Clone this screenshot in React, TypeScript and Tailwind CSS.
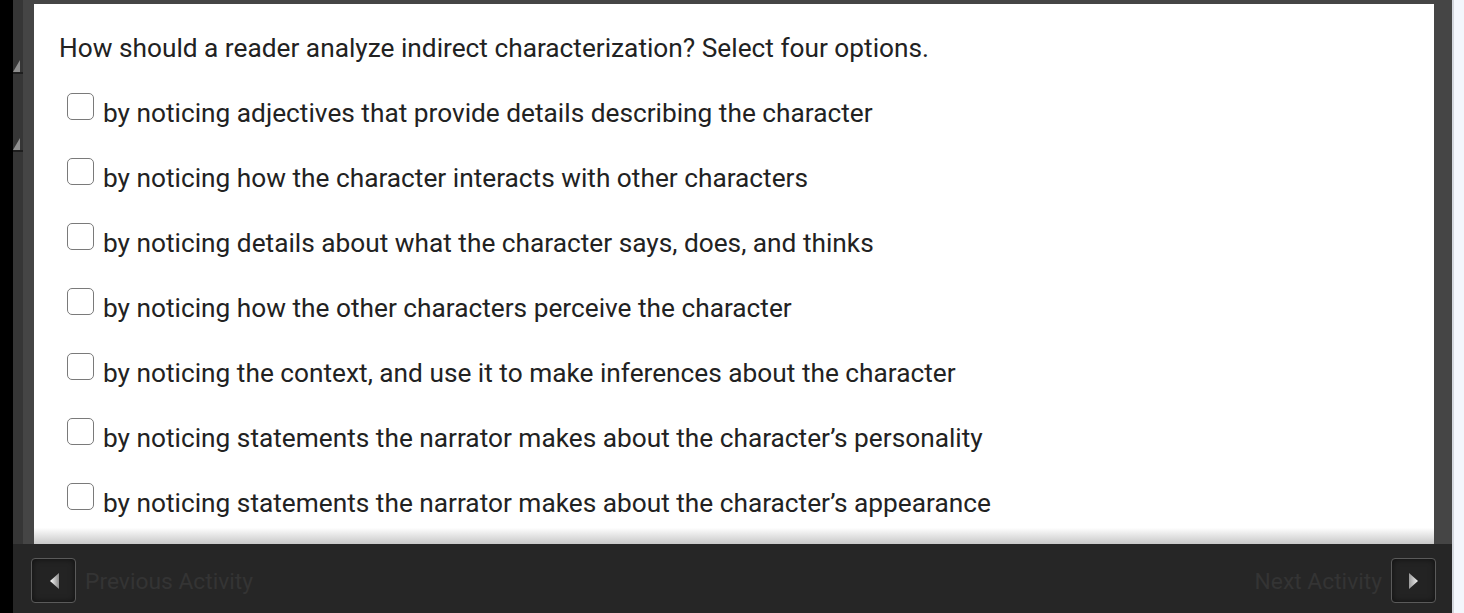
import React from "react";

const options = [
  "by noticing adjectives that provide details describing the character",
  "by noticing how the character interacts with other characters",
  "by noticing details about what the character says, does, and thinks",
  "by noticing how the other characters perceive the character",
  "by noticing the context, and use it to make inferences about the character",
  "by noticing statements the narrator makes about the character’s personality",
  "by noticing statements the narrator makes about the character’s appearance",
];

const Grip = () => (
  <div className="flex flex-col">
    <div className="flex h-[12px] w-[10px]">
      <svg width="7" height="12" viewBox="0 0 7 12">
        <polygon points="0,12 7,0 7,12" fill="#8f8f8f" />
      </svg>
    </div>
    <div className="h-[2px] w-[10px] bg-[#1e1e1e]" />
  </div>
);

const NavButton = ({ dir }: { dir: "left" | "right" }) => (
  <div className="flex h-[45px] w-[45px] items-center justify-center rounded-[4px] border border-[#5a5a5a] bg-[#232323] shadow-[inset_0_0_6px_rgba(0,0,0,0.6)]">
    <svg width="10" height="16" viewBox="0 0 10 16">
      <defs>
        <linearGradient id={`g-${dir}`} x1="0" y1="0" x2="1" y2="0">
          <stop offset="0" stopColor={dir === "left" ? "#ffffff" : "#9a9a9a"} />
          <stop offset="1" stopColor={dir === "left" ? "#8a8a8a" : "#f2f2f2"} />
        </linearGradient>
      </defs>
      {dir === "left" ? (
        <polygon points="10,0 10,16 1,8" fill={`url(#g-${dir})`} />
      ) : (
        <polygon points="0,0 0,16 9,8" fill={`url(#g-${dir})`} />
      )}
    </svg>
  </div>
);

export default function App() {
  return (
    <div
      className="flex h-[613px] w-full overflow-hidden bg-black"
      style={{ fontFamily: "Roboto, 'Liberation Sans', sans-serif" }}
    >
      <div className="w-[13px] shrink-0 bg-black" />

      <div className="flex w-[1439px] shrink-0 flex-col">
        {/* content area */}
        <div className="flex h-[544px]">
          <div className="flex w-[10px] flex-col bg-[#363636] pt-[60px]">
            <Grip />
            <div className="h-[64px]" />
            <Grip />
          </div>
          <div className="flex flex-1 bg-[#454545] pl-[11px] pr-[18px] pt-[4px]">
            <div className="flex-1 bg-gradient-to-b from-white from-[97%] to-[#c8c8c8] pl-[25px] pt-[11px] text-[#222]">
              <div className="flex h-[65px] items-center text-[26.25px] leading-[30px]">
                How should a reader analyze indirect characterization? Select four options.
              </div>
              {options.map((opt) => (
                <div key={opt} className="flex h-[65px] items-center pl-[8px]">
                  <div className="-mt-[12px] mr-[9px] h-[27px] w-[27px] shrink-0 rounded-[5px] border-[1.5px] border-[#7a7a7a] bg-white" />
                  <span className="text-[26.25px] leading-[30px]">{opt}</span>
                </div>
              ))}
            </div>
          </div>
        </div>

        {/* bottom nav */}
        <div className="flex flex-1 items-start justify-between bg-[#262626] pl-[18px] pr-[16px] pt-[14px]">
          <div className="flex items-center gap-[9px]">
            <NavButton dir="left" />
            <span className="mt-[3px] text-[22.8px] text-[#343434]">Previous Activity</span>
          </div>
          <div className="flex items-center gap-[9px]">
            <span className="mt-[3px] text-[22.8px] text-[#343434]">Next Activity</span>
            <NavButton dir="right" />
          </div>
        </div>
      </div>

      <div className="w-[2px] shrink-0 bg-[#d3d7de]" />
      <div className="flex-1 bg-[#f3f6fc]" />
    </div>
  );
}
